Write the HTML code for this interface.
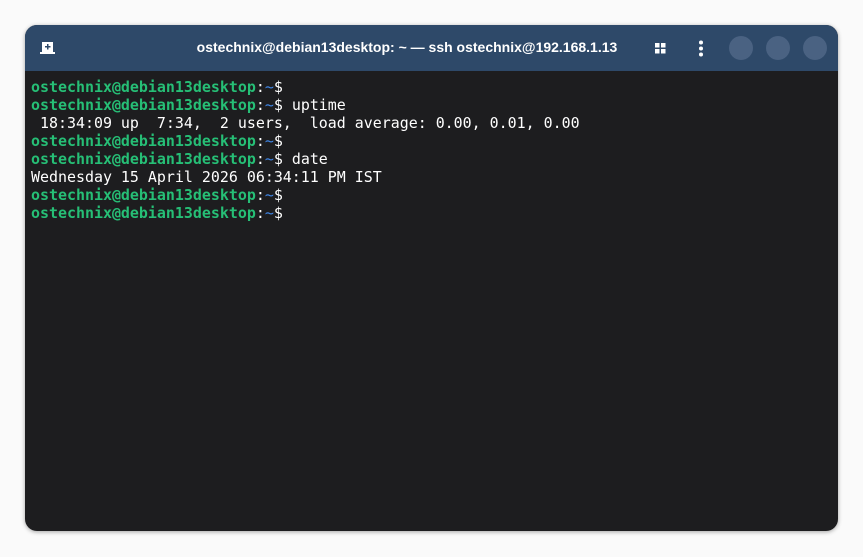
<!DOCTYPE html>
<html><head><style>
body{margin:0;width:863px;height:557px;background:#fafafa;overflow:hidden;font-family:"Liberation Sans",sans-serif}
.win{position:absolute;left:25px;top:25px;width:813px;height:506px;border-radius:12px;background:#1d1d1f;overflow:hidden;box-shadow:0 1px 4px rgba(0,0,0,.35)}
.hdr{position:absolute;left:0;top:0;width:100%;height:46px;background:#2e4969}
.title{position:absolute;left:0;width:764px;top:14px;text-align:center;color:#fff;font-weight:bold;font-size:14px}
.c{position:absolute;top:11px;width:24px;height:24px;border-radius:50%;background:#4a6282}
pre{position:absolute;left:6px;top:53px;margin:0;font-family:"DejaVu Sans Mono",monospace;font-size:14.95px;line-height:18px;color:#fff}
.g{color:#26bf76;font-weight:bold}.b{color:#3f86e6}
</style></head><body>
<div class="win">
<div class="hdr">
<svg style="position:absolute;left:15px;top:16px" width="15" height="13" viewBox="0 0 15 13"><path d="M2 1h11v10h2v2H0v-2h2z" fill="#fff"/><path d="M7 3h1.5v2h2v1.5h-2v2H7v-2H5V5h2z" fill="#2e4969"/></svg>
<div class="title">ostechnix@debian13desktop: ~ — ssh ostechnix@192.168.1.13</div>
<svg style="position:absolute;left:630px;top:18px" width="11" height="11"><rect x="0" y="0" width="4.5" height="4.5" fill="#fff"/><rect x="6" y="0" width="4.5" height="4.5" fill="#fff"/><rect x="0" y="6" width="4.5" height="4.5" fill="#fff"/><rect x="6" y="6" width="4.5" height="4.5" fill="#fff"/></svg>
<svg style="position:absolute;left:673px;top:15px" width="6" height="17"><circle cx="3" cy="2.5" r="2" fill="#fff"/><circle cx="3" cy="8.5" r="2" fill="#fff"/><circle cx="3" cy="14.5" r="2" fill="#fff"/></svg>
<div class="c" style="left:704px"></div><div class="c" style="left:741px"></div><div class="c" style="left:778px"></div>
</div>
<pre><span class="g">ostechnix@debian13desktop</span>:<span class="b">~</span>$
<span class="g">ostechnix@debian13desktop</span>:<span class="b">~</span>$ uptime
 18:34:09 up  7:34,  2 users,  load average: 0.00, 0.01, 0.00
<span class="g">ostechnix@debian13desktop</span>:<span class="b">~</span>$
<span class="g">ostechnix@debian13desktop</span>:<span class="b">~</span>$ date
Wednesday 15 April 2026 06:34:11 PM IST
<span class="g">ostechnix@debian13desktop</span>:<span class="b">~</span>$
<span class="g">ostechnix@debian13desktop</span>:<span class="b">~</span>$</pre>
</div>
</body></html>
